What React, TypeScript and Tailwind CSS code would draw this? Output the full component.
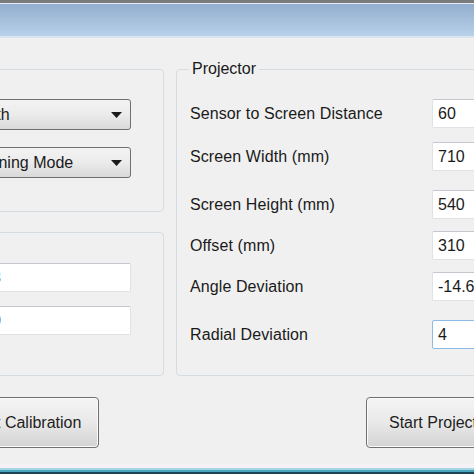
import React from 'react';

const fieldRows = [
  { label: 'Sensor to Screen Distance', value: '60', gap: 'mt-[21px]' },
  { label: 'Screen Width (mm)', value: '710', gap: 'mt-[14px]' },
  { label: 'Screen Height (mm)', value: '540', gap: 'mt-[19px]' },
  { label: 'Offset (mm)', value: '310', gap: 'mt-[12px]' },
  { label: 'Angle Deviation', value: '-14.63', gap: 'mt-[12px]' },
  { label: 'Radial Deviation', value: '4', gap: 'mt-[19px]', focused: true },
];

const Combo = ({ text, className }: { text: string; className?: string }) => (
  <div
    className={`flex items-center h-[31px] rounded-[3px] border border-[#707070] bg-gradient-to-b from-[#f3f3f3] via-[#ebebeb] to-[#d9d9d9] pl-[6px] pr-[8px] ${className ?? ''}`}
  >
    <span className="flex-1 whitespace-nowrap overflow-hidden">{text}</span>
    <svg width="11" height="6" viewBox="0 0 11 6">
      <path d="M0 0h11L5.5 6z" fill="#1a1a1a" />
    </svg>
  </div>
);

const TextBox = ({ value, focused, className }: { value: string; focused?: boolean; className?: string }) => (
  <div
    className={`flex items-center h-[29px] rounded-[2px] bg-white pl-[5px] border ${
      focused ? 'border-[#8dbbe8]' : 'border-[#dfe2e6] border-t-[#c4c8ce]'
    } ${className ?? ''}`}
  >
    {value}
  </div>
);

const Button = ({ text, className }: { text: string; className?: string }) => (
  <button
    className={`h-[51px] rounded-[4px] border border-[#707070] bg-gradient-to-b from-[#f4f4f4] via-[#e9e9e9] to-[#d3d3d3] shadow-[inset_0_0_0_1px_#fbfbfb] text-[#1e1e1e] ${className ?? ''}`}
  >
    {text}
  </button>
);

export default function App() {
  return (
    <div className="w-[474px] h-[474px] overflow-hidden flex flex-col bg-[#f0f0f0] text-[16px] text-[#1a1a1a] font-['Liberation_Sans',Arial,sans-serif]">
      {/* window frame + title bar */}
      <div className="h-[3px] bg-[#7a7a7a]" />
      <div className="h-[1px] bg-[#e6edf5]" />
      <div className="h-[32px] bg-gradient-to-b from-[#92adce] to-[#b9d1ea]" />
      <div className="h-[2px] bg-[#dae4ee]" />

      <div className="flex-1 flex flex-col">
        <div className="flex gap-[12px] ml-[-60px] mt-[22px]">
          {/* left column */}
          <div className="w-[224px] shrink-0 flex flex-col">
            <div className="mt-[9px] h-[143px] rounded-[4px] border border-[#d5dce2] pt-[29px] pr-[32px] flex flex-col gap-[17px]">
              <Combo text="Kinect Depth" className="ml-[-30px]" />
              <Combo text="Scanning Mode" className="ml-[14px]" />
            </div>
            <div className="mt-[20px] h-[144px] rounded-[4px] border border-[#d5dce2] pt-[30px] pr-[32px] flex flex-col gap-[14px]">
              <TextBox value="48" className="ml-[36px]" />
              <TextBox value="80" className="ml-[36px]" />
            </div>
          </div>

          {/* projector group */}
          <fieldset className="w-[344px] shrink-0 h-[316px] rounded-[4px] border border-[#d5dce2] pl-[13px]">
            <legend className="ml-[-1px] px-[3px] leading-[18px]">Projector</legend>
            {fieldRows.map((row) => (
              <div key={row.label} className={`flex items-center ${row.gap}`}>
                <span className="w-[242px] shrink-0 tracking-[0.1px]">{row.label}</span>
                <TextBox value={row.value} focused={row.focused} className="w-[90px]" />
              </div>
            ))}
          </fieldset>
        </div>

        {/* buttons */}
        <div className="flex mt-[21px] ml-[-51px]">
          <Button text="Start Calibration" className="w-[150px] shrink-0" />
          <Button text="Start Projection" className="w-[150px] shrink-0 ml-[267px] text-left pl-[22px]" />
        </div>
      </div>

      {/* taskbar edge */}
      <div className="h-[4px] bg-[#f6f1f6]" />
      <div className="h-[2px] bg-[#a3d6e2]" />
      <div className="h-[2px] bg-[#4aa6bf]" />
      <div className="h-[2px] bg-[#1b4454]" />
    </div>
  );
}
